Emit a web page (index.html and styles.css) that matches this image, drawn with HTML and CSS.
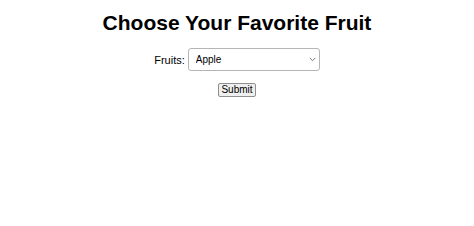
FILE: index.html
```html
<!DOCTYPE html>
<html>
<head>
<meta charset="utf-8">
<link rel="stylesheet" href="styles.css">
</head>
<body>
<div class="page">
  <h1 class="title">Choose Your Favorite Fruit</h1>
  <form class="form">
    <div class="row">
      <label class="label" for="fruits">Fruits:</label>
      <div class="select-wrap">
        <select class="select" id="fruits">
          <option>Apple</option>
          <option>Banana</option>
          <option>Orange</option>
        </select>
        <svg class="chevron" width="7" height="5" viewBox="0 0 7 5"><path d="M0.8 1 L3.5 3.7 L6.2 1" fill="none" stroke="#777" stroke-width="1"/></svg>
      </div>
    </div>
    <button class="submit" type="button">Submit</button>
  </form>
</div>
</body>
</html>
```
FILE: styles.css
```css
html, body {
  margin: 0;
  padding: 0;
  background: #fff;
}
.page {
  font-family: "Liberation Sans", Arial, sans-serif;
  color: #000;
  display: flex;
  flex-direction: column;
  align-items: center;
  padding-top: 10px;
}
.title {
  font-size: 21px;
  font-weight: bold;
  margin: 0 0 13px 0;
  line-height: 25px;
}
.form {
  display: flex;
  flex-direction: column;
  align-items: center;
  gap: 12px;
}
.row {
  display: flex;
  align-items: center;
  gap: 3px;
}
.label {
  font-size: 11px;
}
.select-wrap {
  position: relative;
  width: 132px;
  height: 23px;
}
.select {
  -webkit-appearance: none;
  appearance: none;
  box-sizing: border-box;
  width: 132px;
  height: 23px;
  margin: 0;
  font-family: "Liberation Sans", Arial, sans-serif;
  font-size: 10px;
  color: #000;
  border: 1px solid #b5b5b5;
  border-radius: 3px;
  background: #fff;
  padding: 0 7px;
}
.chevron {
  position: absolute;
  right: 4px;
  top: 9px;
  pointer-events: none;
}
.submit {
  box-sizing: border-box;
  height: 14px;
  font-family: "Liberation Sans", Arial, sans-serif;
  font-size: 10px;
  line-height: 12px;
  padding: 0 2px;
  color: #000;
  border: 1px solid #8f8f8f;
  border-radius: 2px;
  background: #efefef;
}
```
